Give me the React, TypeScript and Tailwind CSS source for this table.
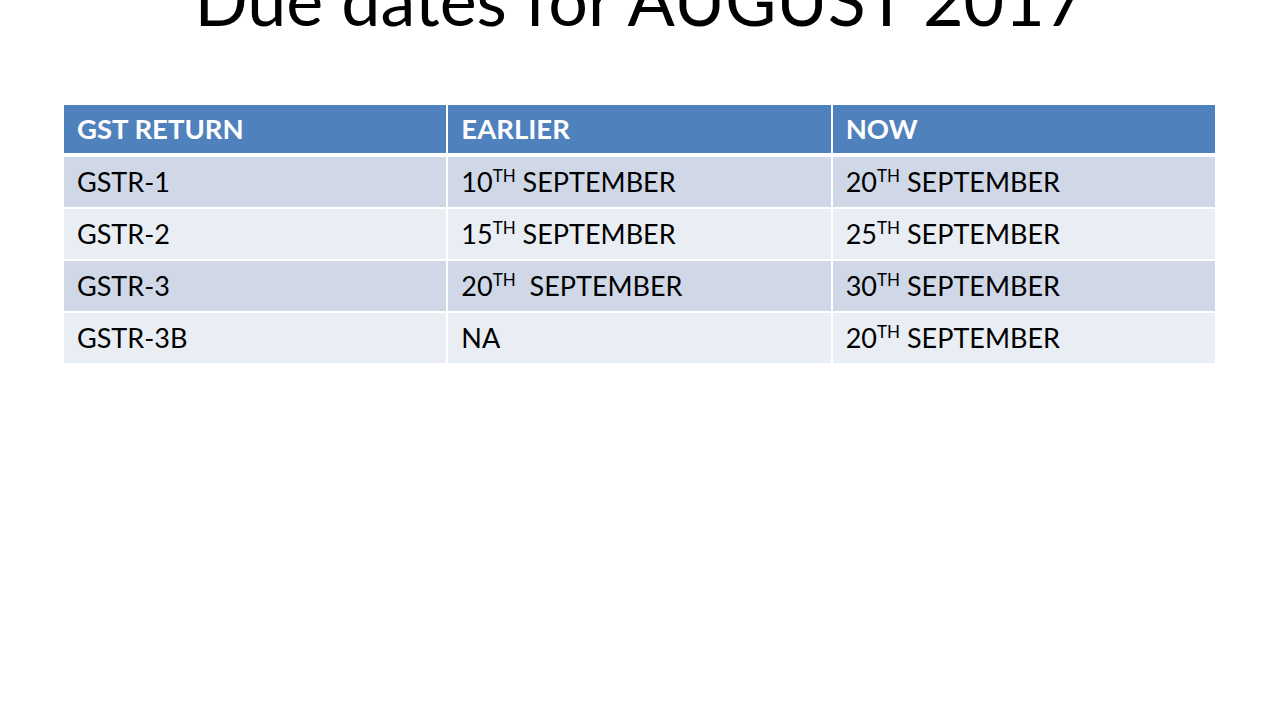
import React from "react";

const rows = [
  { ret: "GSTR-1", earlier: ["10", "TH", " SEPTEMBER"], now: ["20", "TH", " SEPTEMBER"] },
  { ret: "GSTR-2", earlier: ["15", "TH", " SEPTEMBER"], now: ["25", "TH", " SEPTEMBER"] },
  { ret: "GSTR-3", earlier: ["20", "TH", "\u00a0 SEPTEMBER"], now: ["30", "TH", " SEPTEMBER"] },
  { ret: "GSTR-3B", earlier: null, now: ["20", "TH", " SEPTEMBER"] },
];

const DateText = ({ parts }: { parts: string[] | null }) => {
  if (!parts) return <span>NA</span>;
  return (
    <span>
      {parts[0]}
      <sup className="text-[17px] top-[-0.6em]">{parts[1]}</sup>
      {parts[2]}
    </span>
  );
};

const App: React.FC = () => {
  return (
    <div className="w-[1280px] h-[720px] bg-white overflow-hidden" style={{ fontFamily: "Lato, 'Open Sans', sans-serif" }}>
      <div className="h-[105px] overflow-hidden">
        <h1 className="text-center text-[70px] leading-none text-black mt-[-36px]">
          Due dates for AUGUST 2017
        </h1>
      </div>

      <div className="mx-[64px] w-[1151px] grid grid-cols-3 gap-x-[2px] text-[27px] text-black">
        <div className="bg-[#4f81bd] h-[48px] flex items-center pl-[13px] font-bold text-white text-[27.5px]">GST RETURN</div>
        <div className="bg-[#4f81bd] h-[48px] flex items-center pl-[13px] font-bold text-white text-[27.5px]">EARLIER</div>
        <div className="bg-[#4f81bd] h-[48px] flex items-center pl-[13px] font-bold text-white text-[27.5px]">NOW</div>
        {rows.map((r, i) => {
          const bg = i % 2 === 0 ? "bg-[#d0d8e8]" : "bg-[#e9edf4]";
          const top = i === 0 ? "mt-[4px]" : "mt-[2px]";
          return (
            <React.Fragment key={r.ret}>
              <div className={`${bg} ${top} h-[50px] flex items-center pl-[13px]`}>{r.ret}</div>
              <div className={`${bg} ${top} h-[50px] flex items-center pl-[13px]`}><DateText parts={r.earlier} /></div>
              <div className={`${bg} ${top} h-[50px] flex items-center pl-[13px]`}><DateText parts={r.now} /></div>
            </React.Fragment>
          );
        })}
      </div>
    </div>
  );
};

export default App;
